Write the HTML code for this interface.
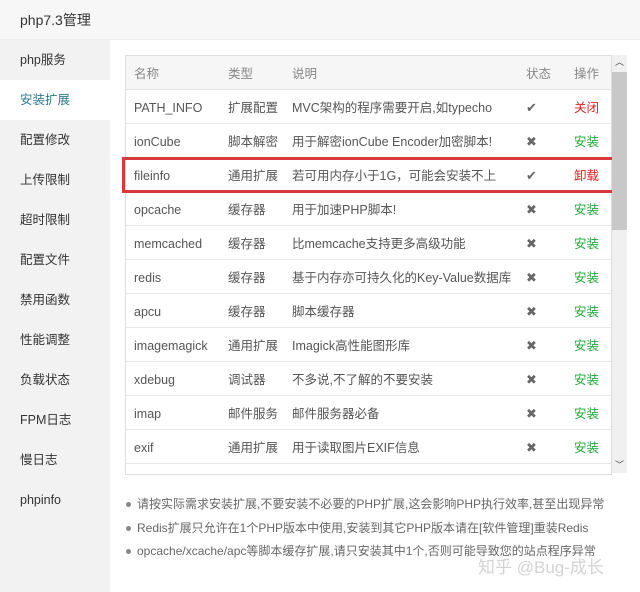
<!DOCTYPE html><html><head><meta charset="utf-8"><style>
*{margin:0;padding:0;box-sizing:border-box}
body{width:640px;height:592px;overflow:hidden;background:#fff;font-family:"Liberation Sans","Noto Sans CJK SC",sans-serif;color:#555;font-size:12.5px;position:relative}
.title{position:absolute;left:0;top:0;width:640px;height:40px;background:#f7f7f7;border-bottom:1px solid #eee;font-size:14px;color:#333;line-height:40px;padding-left:20px}
.side{position:absolute;left:0;top:40px;width:110px;height:552px;background:#f2f2f2}
.side div{height:40px;line-height:40px;padding-left:20px;color:#333;font-size:12.5px}
.side .on{background:#fff;color:#2b7a8c}
.tbl{position:absolute;left:125px;top:55px;width:487px;height:420px;border:1px solid #ddd;overflow:hidden}
.row{height:34px;border-bottom:1px solid #e6e6e6;position:relative;line-height:36px}
.row span{position:absolute;top:0}
.hd{background:#f6f6f6;color:#888}
.c1{left:8px}.c2{left:102px}.c3{left:166px}.c4{left:400px}.c5{left:448px}
.g{color:#20a53a}.r{color:#e02020}
.st{font-size:13px;color:#666}
.hl{position:absolute;left:122px;top:157px;width:499px;height:36px;border:3px solid #d9383f}
.sb{position:absolute;left:612px;top:55px;width:15px;height:418px;background:#f0f0f0}
.sb .th{position:absolute;left:0;top:17px;width:15px;height:158px;background:#c8c8c8}
.notes{position:absolute;left:125px;top:494px;font-size:12px;color:#666}
.notes div{height:23.5px;line-height:20px}
.notes div:before{content:"";display:inline-block;width:5px;height:5px;border-radius:50%;background:#888;margin-right:6px;vertical-align:middle;margin-left:1px}
.wm{position:absolute;left:478px;top:553px;font-size:17px;color:rgba(200,200,200,.8)}
</style></head><body>
<div class="title">php7.3管理</div>
<div class="side"><div>php服务</div><div class="on">安装扩展</div><div>配置修改</div><div>上传限制</div><div>超时限制</div><div>配置文件</div><div>禁用函数</div><div>性能调整</div><div>负载状态</div><div>FPM日志</div><div>慢日志</div><div>phpinfo</div></div>
<div class="tbl">
<div class="row hd"><span class="c1">名称</span><span class="c2">类型</span><span class="c3">说明</span><span class="c4">状态</span><span class="c5">操作</span></div>
<div class="row"><span class="c1">PATH_INFO</span><span class="c2">扩展配置</span><span class="c3">MVC架构的程序需要开启,如typecho</span><span class="c4 st">✔</span><span class="c5 r">关闭</span></div>
<div class="row"><span class="c1">ionCube</span><span class="c2">脚本解密</span><span class="c3">用于解密ionCube Encoder加密脚本!</span><span class="c4 st">✖</span><span class="c5 g">安装</span></div>
<div class="row"><span class="c1">fileinfo</span><span class="c2">通用扩展</span><span class="c3">若可用内存小于1G，可能会安装不上</span><span class="c4 st">✔</span><span class="c5 r">卸载</span></div>
<div class="row"><span class="c1">opcache</span><span class="c2">缓存器</span><span class="c3">用于加速PHP脚本!</span><span class="c4 st">✖</span><span class="c5 g">安装</span></div>
<div class="row"><span class="c1">memcached</span><span class="c2">缓存器</span><span class="c3">比memcache支持更多高级功能</span><span class="c4 st">✖</span><span class="c5 g">安装</span></div>
<div class="row"><span class="c1">redis</span><span class="c2">缓存器</span><span class="c3">基于内存亦可持久化的Key-Value数据库</span><span class="c4 st">✖</span><span class="c5 g">安装</span></div>
<div class="row"><span class="c1">apcu</span><span class="c2">缓存器</span><span class="c3">脚本缓存器</span><span class="c4 st">✖</span><span class="c5 g">安装</span></div>
<div class="row"><span class="c1">imagemagick</span><span class="c2">通用扩展</span><span class="c3">Imagick高性能图形库</span><span class="c4 st">✖</span><span class="c5 g">安装</span></div>
<div class="row"><span class="c1">xdebug</span><span class="c2">调试器</span><span class="c3">不多说,不了解的不要安装</span><span class="c4 st">✖</span><span class="c5 g">安装</span></div>
<div class="row"><span class="c1">imap</span><span class="c2">邮件服务</span><span class="c3">邮件服务器必备</span><span class="c4 st">✖</span><span class="c5 g">安装</span></div>
<div class="row"><span class="c1">exif</span><span class="c2">通用扩展</span><span class="c3">用于读取图片EXIF信息</span><span class="c4 st">✖</span><span class="c5 g">安装</span></div>
</div>
<div class="hl"></div>
<div class="sb"><div class="th"></div><span style="position:absolute;top:0;left:3px;font-size:9px;color:#444">︿</span><span style="position:absolute;bottom:2px;left:3px;font-size:9px;color:#444">﹀</span></div>
<div class="notes"><div>请按实际需求安装扩展,不要安装不必要的PHP扩展,这会影响PHP执行效率,甚至出现异常</div><div>Redis扩展只允许在1个PHP版本中使用,安装到其它PHP版本请在[软件管理]重装Redis</div><div>opcache/xcache/apc等脚本缓存扩展,请只安装其中1个,否则可能导致您的站点程序异常</div></div>
<div class="wm">知乎 @Bug-成长</div>
</body></html>
